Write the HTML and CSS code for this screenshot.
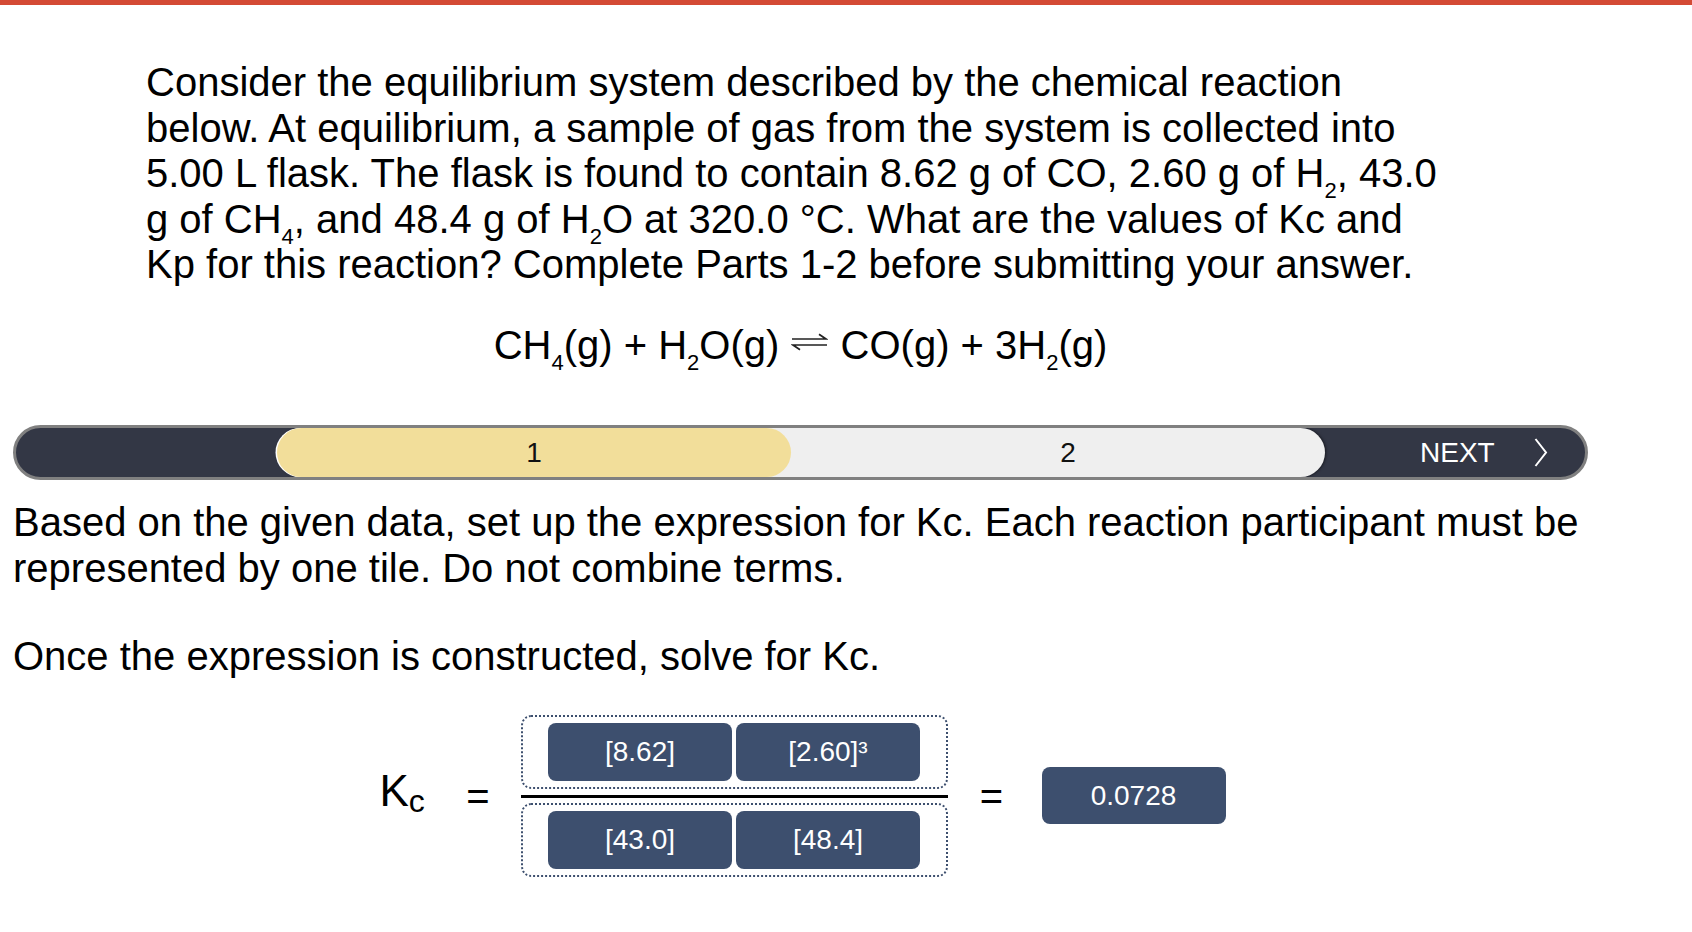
FILE: index.html
```html
<!DOCTYPE html>
<html lang="en">
<head>
<meta charset="utf-8">
<title>Equilibrium Kc</title>
<link rel="stylesheet" href="styles.css">
</head>
<body>
<div class="topbar"></div>
<main class="page">
  <p class="question">Consider the equilibrium system described by the chemical reaction below. At equilibrium, a sample of gas from the system is collected into 5.00 L flask. The flask is found to contain 8.62 g of CO, 2.60 g of H<sub class="sb">2</sub>, 43.0 g of CH<sub class="sb">4</sub>, and 48.4 g of H<sub class="sb">2</sub>O at 320.0 °C. What are the values of Kc and Kp for this reaction? Complete Parts 1-2 before submitting your answer.</p>

  <p class="reaction">CH<sub class="sb">4</sub>(g) + H<sub class="sb">2</sub>O(g) <svg class="arrow" width="37" height="18" viewBox="0 0 37 18" aria-label="equilibrium"><path d="M1 6 H35 L28 1.2" fill="none" stroke="#222" stroke-width="1.7"/><path d="M36 12 H2 L9 16.8" fill="none" stroke="#222" stroke-width="1.7"/></svg> CO(g) + 3H<sub class="sb">2</sub>(g)</p>

  <nav class="stepper">
    <div class="stepper-lead"></div>
    <div class="track">
      <div class="step active">1</div>
      <div class="step">2</div>
    </div>
    <div class="next">
      <span>NEXT</span>
      <svg class="chev" width="14" height="29" viewBox="0 0 14 29"><polyline points="1.5,1 12,14.5 1.5,28" fill="none" stroke="#fff" stroke-width="2"/></svg>
    </div>
  </nav>

  <p class="text first">Based on the given data, set up the expression for Kc. Each reaction participant must be represented by one tile. Do not combine terms.</p>
  <p class="text second">Once the expression is constructed, solve for Kc.</p>

  <div class="kc-row">
    <div class="kc-label">K<span class="kc-sub">c</span></div>
    <div class="eq">=</div>
    <div class="fraction">
      <div class="dropzone">
        <div class="tile">[8.62]</div>
        <div class="tile">[2.60]³</div>
      </div>
      <div class="fraction-line"></div>
      <div class="dropzone">
        <div class="tile">[43.0]</div>
        <div class="tile">[48.4]</div>
      </div>
    </div>
    <div class="eq eq2">=</div>
    <div class="tile result">0.0728</div>
  </div>
</main>
</body>
</html>
```
FILE: styles.css
```css
* { box-sizing: border-box; }

html, body {
  margin: 0;
  padding: 0;
  background: #fff;
}

body {
  font-family: "Liberation Sans", Arial, Helvetica, sans-serif;
  color: #000;
}

.topbar {
  height: 5px;
  background: #d44a35;
}

.page {
  margin-left: 13px;
  width: 1575px;
}

.question {
  margin: 55px 0 0 133px;
  width: 1300px;
  font-size: 40px;
  line-height: 45.5px;
}

.sb {
  font-size: 22px;
  line-height: 0;
  vertical-align: -11px;
}

.reaction {
  margin: 35px 0 0;
  text-align: center;
  font-size: 40px;
  line-height: 45.5px;
}

.arrow {
  vertical-align: 8px;
  margin: 0 1px 0 1px;
}

/* progress stepper */
.stepper {
  margin-top: 57px;
  height: 55px;
  border: 3px solid #808080;
  border-radius: 28px;
  background: #333745;
  display: flex;
  overflow: hidden;
}

.stepper-lead {
  flex: none;
  width: 261px;
}

.track {
  flex: none;
  width: 1048px;
  display: flex;
  background: #efefef;
  border-radius: 25px;
  box-shadow: 1px 0 3px rgba(0, 0, 0, 0.55);
}

.step {
  flex: 1;
  display: flex;
  align-items: center;
  justify-content: center;
  padding-left: 20px;
  font-size: 28px;
  color: #111;
}

.step.active {
  flex: none;
  width: 514px;
  padding-left: 0;
  background: #f2de9a;
  border-radius: 25px;
  box-shadow: -1.5px 0 0 #fff;
}

.next {
  flex: 1;
  display: flex;
  align-items: center;
  padding-left: 95px;
  gap: 39px;
  color: #fff;
  font-size: 28px;
}

.chev {
  display: block;
}

/* instructions */
.text {
  font-size: 40px;
  line-height: 45.5px;
  margin: 0;
}

.text.first {
  margin-top: 20px;
}

.text.second {
  margin-top: 43px;
}

/* Kc expression */
.kc-row {
  margin-top: 35px;
  display: flex;
  align-items: center;
  justify-content: center;
  padding-left: 4px;
}

.kc-label {
  width: 66px;
  font-size: 44px;
  line-height: 44px;
}

.kc-sub {
  font-size: 32px;
  vertical-align: -6px;
}

.eq {
  width: 65px;
  text-align: center;
  font-size: 40px;
  line-height: 40px;
}

.eq2 {
  width: 68px;
  margin-right: 16px;
}

.fraction {
  padding: 0 10px;
  display: flex;
  flex-direction: column;
}

.dropzone {
  width: 427px;
  height: 74px;
  border: 2px dotted #3d4f6e;
  border-radius: 10px;
  display: flex;
  align-items: center;
  justify-content: center;
  gap: 4px;
}

.fraction-line {
  height: 3px;
  background: #000;
  margin: 6px 0 5px;
}

.tile {
  width: 184px;
  height: 58px;
  border-radius: 8px;
  background: #3d4f6e;
  color: #fff;
  font-size: 28px;
  display: flex;
  align-items: center;
  justify-content: center;
}

.tile.result {
  height: 57px;
}
```
